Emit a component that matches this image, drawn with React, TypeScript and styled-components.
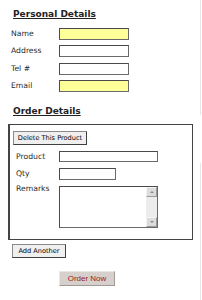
import React from "react";
import styled, { createGlobalStyle } from "styled-components";

const GlobalStyle = createGlobalStyle`
  body {
    margin: 0;
    background: #fff;
  }
`;

const Page = styled.div`
  display: flex;
  width: 202px;
  height: 300px;
  overflow: hidden;
  font-family: "DejaVu Sans", Verdana, sans-serif;
  color: #333;
`;

const Main = styled.form`
  width: 200px;
  margin: 0;
  display: flex;
  flex-direction: column;
  align-items: flex-start;
`;

// faint rule of the neighbouring column
const Edge = styled.div`
  width: 2px;
  display: flex;
  flex-direction: column;
  gap: 48px;
`;

const EdgeLine = styled.div<{ $h?: number }>`
  width: 1px;
  background: #e6e6e6;
  ${(p) => (p.$h ? `height: ${p.$h}px;` : "flex: 1;")}
`;

const Heading = styled.h2<{ $top: number }>`
  margin: ${(p) => p.$top}px 0 0 13px;
  font-size: 9px;
  line-height: 11px;
  font-weight: bold;
  text-decoration: underline;
  color: #222;
`;

const Rows = styled.div<{ $left: number; $top: number }>`
  display: flex;
  flex-direction: column;
  padding-left: ${(p) => p.$left}px;
  margin-top: ${(p) => p.$top}px;
`;

const Row = styled.div<{ $h?: number; $label?: number }>`
  display: grid;
  grid-template-columns: ${(p) => p.$label ?? 48}px auto;
  align-items: center;
  height: ${(p) => p.$h ?? 17.33}px;
`;

const Label = styled.label`
  font-size: 7.7px;
  line-height: 10px;
  color: #2a2a2a;
`;

const TopLabel = styled(Label)`
  align-self: start;
  padding-top: 2px;
`;

const Input = styled.input<{ $w: number; $h?: number; $req?: boolean }>`
  box-sizing: border-box;
  width: ${(p) => p.$w}px;
  height: ${(p) => p.$h ?? 12}px;
  margin: 0;
  padding: 0 2px;
  border: 1px solid #4a4a4a;
  border-right-color: #6a6a6a;
  border-bottom-color: #6a6a6a;
  background: ${(p) => (p.$req ? "#ffff99" : "#fff")};
  font: 7.7px "DejaVu Sans", Verdana, sans-serif;
  outline: none;
`;

const Box = styled.fieldset`
  box-sizing: border-box;
  width: 185px;
  height: 116px;
  margin: 7px 0 0 8px;
  padding: 6px 0 0 0;
  border: 1px solid #444;
  border-left-width: 2px;
  display: flex;
  flex-direction: column;
  align-items: flex-start;
  min-inline-size: 0;
`;

const SmallButton = styled.button<{ $w: number; $left: number; $top: number }>`
  box-sizing: border-box;
  width: ${(p) => p.$w}px;
  height: 14px;
  margin: ${(p) => p.$top}px 0 0 ${(p) => p.$left}px;
  padding: 0;
  background: #efefef;
  border: 1px solid #8a8a8a;
  border-right-color: #404040;
  border-bottom-color: #404040;
  font: 6.6px "DejaVu Sans", Verdana, sans-serif;
  color: #000;
  white-space: nowrap;
`;

const OrderButton = styled.button`
  box-sizing: border-box;
  width: 56px;
  height: 15px;
  margin: 13px 0 0 59px;
  padding: 0;
  background: #d6d0cc;
  border: 1px solid #ebe7e3;
  border-right-color: #9f9a96;
  border-bottom-color: #9f9a96;
  font: 8px "Liberation Sans", Arial, sans-serif;
  color: #992020;
`;

const TextBox = styled.div`
  box-sizing: border-box;
  align-self: end;
  width: 99px;
  height: 42px;
  display: flex;
  border: 1px solid #4a4a4a;
  border-right-color: #6a6a6a;
  border-bottom-color: #6a6a6a;
  background: #fff;
`;

const TextField = styled.textarea`
  flex: 1;
  min-width: 0;
  margin: 0;
  padding: 1px 2px;
  border: none;
  resize: none;
  outline: none;
  overflow: hidden;
  font: 7.7px "DejaVu Sans", Verdana, sans-serif;
`;

const Scrollbar = styled.div`
  width: 11px;
  display: flex;
  flex-direction: column;
  justify-content: space-between;
  background: #ececec;
`;

const Arrow = styled.div<{ $down?: boolean }>`
  box-sizing: border-box;
  height: 10px;
  display: flex;
  align-items: center;
  justify-content: center;
  background: #dcdcdc;
  border: 1px solid #f4f4f4;
  border-right-color: #9a9a9a;
  border-bottom-color: #9a9a9a;

  &::after {
    content: "";
    border-left: 2.5px solid transparent;
    border-right: 2.5px solid transparent;
    ${(p) =>
      p.$down
        ? "border-top: 2.5px solid #8a8a8a;"
        : "border-bottom: 2.5px solid #8a8a8a;"}
  }
`;

export default function App() {
  return (
    <>
      <GlobalStyle />
      <Page>
        <Main onSubmit={(e) => e.preventDefault()}>
          <Heading $top={9}>Personal Details</Heading>
          <Rows $left={11} $top={5.33}>
            <Row>
              <Label>Name</Label>
              <Input $w={70} $req />
            </Row>
            <Row>
              <Label>Address</Label>
              <Input $w={70} />
            </Row>
            <Row>
              <Label>Tel #</Label>
              <Input $w={70} />
            </Row>
            <Row>
              <Label>Email</Label>
              <Input $w={70} $req />
            </Row>
          </Rows>

          <Heading $top={11.33}>Order Details</Heading>
          <Box>
            <SmallButton type="button" $w={74} $left={3} $top={0}>
              Delete This Product
            </SmallButton>
            <Rows $left={6} $top={3.5}>
              <Row $h={17} $label={43}>
                <Label>Product</Label>
                <Input $w={99} $h={11} />
              </Row>
              <Row $h={17} $label={43}>
                <Label>Qty</Label>
                <Input $w={57} $h={12} />
              </Row>
              <Row $h={45.5} $label={43}>
                <TopLabel>Remarks</TopLabel>
                <TextBox>
                  <TextField />
                  <Scrollbar>
                    <Arrow />
                    <Arrow $down />
                  </Scrollbar>
                </TextBox>
              </Row>
            </Rows>
          </Box>
          <SmallButton type="button" $w={54} $left={12} $top={4}>
            Add Another
          </SmallButton>
          <OrderButton type="submit">Order Now</OrderButton>
        </Main>
        <Edge>
          <EdgeLine $h={115} />
          <EdgeLine />
        </Edge>
      </Page>
    </>
  );
}
